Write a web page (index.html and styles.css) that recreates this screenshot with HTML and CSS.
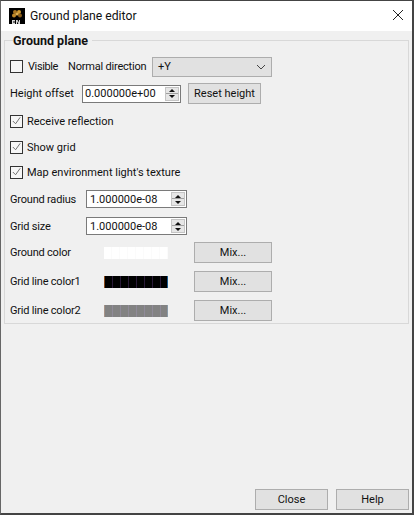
FILE: index.html
```html
<!DOCTYPE html>
<html lang="en">
<head>
    <meta charset="UTF-8">
    <meta name="viewport" content="width=device-width, initial-scale=1.0">
    <title>Ground plane editor</title>
    <link rel="stylesheet" href="styles.css">
</head>
<body>
    <div class="window">
        <div class="titlebar">
            <svg class="app-icon" width="16" height="16" viewBox="0 0 16 16">
                <rect width="16" height="16" fill="#000"/>
                <circle cx="6" cy="4" r="2" fill="#a87420"/>
                <circle cx="10" cy="4" r="2" fill="#d09a30"/>
                <circle cx="5" cy="7.5" r="2" fill="#c08828"/>
                <circle cx="11" cy="7.5" r="2" fill="#8a5c18"/>
                <circle cx="8" cy="6" r="1.6" fill="#e0b050"/>
                <path d="M3 12h3v1H4v.5h2v1H4v.5h2v1H3zM7 12h1.500l1.500 2.500V12h1v4H9.500L8 13.500V16H7z" fill="#d8d8d8"/>
            </svg>
            <span class="title">Ground plane editor</span>
            <svg class="close-x" width="12" height="12" viewBox="0 0 12 12">
                <path d="M1 1l10 10M11 1L1 11" stroke="#222" stroke-width="1" fill="none"/>
            </svg>
        </div>
        <div class="content">
            <div class="group">
                <div class="group-title">Ground plane</div>
                <div class="row row-top">
                    <label class="check check-visible"><span class="box"></span>Visible</label>
                    <span class="normal-label">Normal direction</span>
                    <div class="combo">
                        <span>+Y</span>
                        <svg width="10" height="6" viewBox="0 0 10 6"><path d="M1 1l4 4 4-4" stroke="#444" fill="none"/></svg>
                    </div>
                </div>
                <div class="row row-height">
                    <span class="field-label label-height">Height offset</span>
                    <div class="spin spin-height">
                        <span class="spin-value">0.000000e+00</span>
                        <div class="spin-btns"><span class="arrow-up"></span><span class="arrow-down"></span></div>
                    </div>
                    <button class="btn btn-reset">Reset height</button>
                </div>
                <div class="row row-check">
                    <label class="check"><span class="box"><svg width="12" height="12" viewBox="0 0 12 12"><path d="M2 6l3 3 5-7" stroke="#666" fill="none"/></svg></span>Receive reflection</label>
                </div>
                <div class="row row-check">
                    <label class="check"><span class="box"><svg width="12" height="12" viewBox="0 0 12 12"><path d="M2 6l3 3 5-7" stroke="#666" fill="none"/></svg></span>Show grid</label>
                </div>
                <div class="row row-check">
                    <label class="check"><span class="box"><svg width="12" height="12" viewBox="0 0 12 12"><path d="M2 6l3 3 5-7" stroke="#666" fill="none"/></svg></span>Map environment light's texture</label>
                </div>
                <div class="row row-spin">
                    <span class="field-label label-wide">Ground radius</span>
                    <div class="spin">
                        <span class="spin-value">1.000000e-08</span>
                        <div class="spin-btns"><span class="arrow-up"></span><span class="arrow-down"></span></div>
                    </div>
                </div>
                <div class="row row-spin">
                    <span class="field-label label-wide">Grid size</span>
                    <div class="spin">
                        <span class="spin-value">1.000000e-08</span>
                        <div class="spin-btns"><span class="arrow-up"></span><span class="arrow-down"></span></div>
                    </div>
                </div>
                <div class="row row-color">
                    <span class="field-label label-color">Ground color</span>
                    <div class="swatch swatch-white"></div>
                    <button class="btn btn-mix">Mix...</button>
                </div>
                <div class="row row-color">
                    <span class="field-label label-color">Grid line color1</span>
                    <div class="swatch swatch-black"></div>
                    <button class="btn btn-mix">Mix...</button>
                </div>
                <div class="row row-color">
                    <span class="field-label label-color">Grid line color2</span>
                    <div class="swatch swatch-gray"></div>
                    <button class="btn btn-mix">Mix...</button>
                </div>
            </div>
            <div class="footer">
                <button class="btn btn-foot">Close</button>
                <button class="btn btn-foot">Help</button>
            </div>
        </div>
    </div>
</body>
</html>
```

FILE: styles.css
```css
html, body {
    margin: 0;
    padding: 0;
}
body {
    font-family: Roboto, "Open Sans", sans-serif;
    font-size: 11px;
    color: #111;
}
.window {
    box-sizing: border-box;
    width: 414px;
    height: 515px;
    display: flex;
    flex-direction: column;
    background-color: #f0f0f0;
    border: 1px solid #444;
    border-width: 1px 2px 2px 1px;
    border-left-color: #666;
}
.titlebar {
    height: 30px;
    flex: none;
    display: flex;
    align-items: center;
    background-color: #fff;
    padding: 0 8px 0 8px;
}
.app-icon {
    margin-right: 5px;
}
.title {
    flex: 1;
    font-size: 12.200px;
}
.close-x {
    margin-top: -2px;
}
.content {
    flex: 1;
    display: flex;
    flex-direction: column;
    padding: 9px 3px 3px 3px;
}
.group {
    box-sizing: border-box;
    height: 284px;
    border: 1px solid #d8d8d8;
    padding: 0 5px;
}
.group-title {
    display: inline-block;
    margin: -8px 0 0 3px;
    padding: 0 4px 0 0;
    background-color: #f0f0f0;
    font-weight: 700;
    font-size: 12.500px;
    line-height: 16px;
    vertical-align: top;
}
.row {
    display: flex;
    align-items: center;
}
.row-top {
    height: 21px;
    margin-top: 2px;
}
.row-height {
    height: 21px;
    margin-top: 6px;
}
.row-check {
    height: 16px;
    margin-top: 10px;
}
.row-height + .row-check {
    margin-top: 9px;
}
.row-check + .row-check + .row-check {
    margin-top: 9px;
}
.row-spin {
    height: 18px;
    margin-top: 9px;
}
.row-check + .row-spin {
    margin-top: 10px;
}
.row-color {
    height: 21px;
    margin-top: 8px;
}
.row-spin + .row-color {
    margin-top: 7px;
}
.check {
    display: flex;
    align-items: center;
}
.check-visible {
    width: 58px;
    flex: none;
    letter-spacing: -0.4px;
}
.check-visible .box {
    margin-right: 5px;
}
.box {
    box-sizing: border-box;
    width: 13px;
    height: 13px;
    margin-right: 4px;
    border: 1px solid #333;
    background-color: #f6f6f6;
    display: flex;
    align-items: center;
    justify-content: center;
}
.normal-label {
    width: 84px;
    flex: none;
    white-space: nowrap;
    letter-spacing: -0.2px;
}
.combo {
    box-sizing: border-box;
    width: 120px;
    height: 20px;
    padding: 0 5px;
    border: 1px solid #adadad;
    background-color: #e1e1e1;
    display: flex;
    align-items: center;
    justify-content: space-between;
}
.field-label {
    white-space: nowrap;
}
.label-height {
    width: 72px;
}
.label-wide {
    width: 76px;
    letter-spacing: -0.2px;
}
.label-color {
    width: 94px;
    letter-spacing: -0.2px;
}
.spin {
    box-sizing: border-box;
    width: 101px;
    height: 18px;
    border: 1px solid #7a7a7a;
    background-color: #fff;
    display: flex;
    align-items: center;
    padding-left: 3px;
}
.spin-height {
    width: 99px;
    padding-left: 2px;
}
.spin-value {
    flex: 1;
}
.spin-btns {
    box-sizing: border-box;
    width: 14px;
    height: 14px;
    margin-right: 1px;
    border: 1px solid #c4c4c4;
    background: linear-gradient(#e6e6e6 0 5px, #a0a0a0 5px 6px, #e6e6e6 6px);
    display: flex;
    flex-direction: column;
    align-items: center;
    justify-content: space-around;
}
.arrow-up {
    width: 0;
    height: 0;
    border-left: 3px solid transparent;
    border-right: 3px solid transparent;
    border-bottom: 3px solid #111;
}
.arrow-down {
    width: 0;
    height: 0;
    border-left: 3px solid transparent;
    border-right: 3px solid transparent;
    border-top: 3px solid #111;
}
.btn {
    box-sizing: border-box;
    border: 1px solid #adadad;
    background-color: #e1e1e1;
    font-family: inherit;
    font-size: 11px;
    color: #111;
    padding: 0;
}
.btn-reset {
    width: 73px;
    height: 21px;
    margin-left: 7px;
}
.swatch {
    box-sizing: border-box;
    width: 64px;
    height: 12px;
    flex: none;
}
.swatch-white {
    background: repeating-linear-gradient(90deg, #fff 0 7px, #fbfbfb 7px 8px);
}
.swatch-black {
    border-left: 1px solid #8a4a1a;
    border-right: 1px solid #1a5a90;
    background: repeating-linear-gradient(90deg, #000 0 7px, #2a1a38 7px 8px);
}
.swatch-gray {
    border-left: 1px solid #a89488;
    border-right: 1px solid #8a9aa8;
    background: repeating-linear-gradient(90deg, #828282 0 7px, #8f8a98 7px 8px);
}
.btn-mix {
    width: 78px;
    height: 21px;
    margin-left: 26px;
}
.footer {
    margin-top: auto;
    display: flex;
    justify-content: flex-end;
    gap: 8px;
}
.btn-foot {
    width: 73px;
    height: 21px;
}
```
